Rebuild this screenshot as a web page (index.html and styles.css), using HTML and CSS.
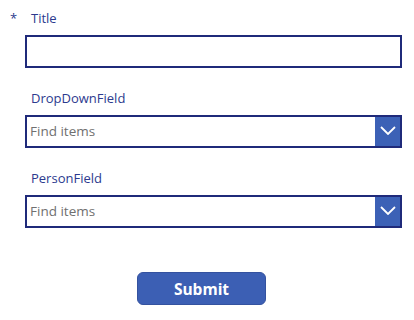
FILE: index.html
```html
<!DOCTYPE html>
<html lang="en">
<head>
<meta charset="utf-8">
<link rel="stylesheet" href="styles.css">
</head>
<body>
<form class="form">
  <div class="field">
    <div class="label"><span class="req">*</span>Title</div>
    <div class="box"></div>
  </div>
  <div class="field">
    <div class="label">DropDownField</div>
    <div class="box combo">
      <span class="ph">Find items</span>
      <span class="chev"><svg width="16" height="9" viewBox="0 0 16 9"><path d="M1 1 L8 8 L15 1" fill="none" stroke="#fff" stroke-width="1.8"/></svg></span>
    </div>
  </div>
  <div class="field">
    <div class="label">PersonField</div>
    <div class="box combo">
      <span class="ph">Find items</span>
      <span class="chev"><svg width="16" height="9" viewBox="0 0 16 9"><path d="M1 1 L8 8 L15 1" fill="none" stroke="#fff" stroke-width="1.8"/></svg></span>
    </div>
  </div>
  <div class="actions">
    <button type="button" class="submit">Submit</button>
  </div>
</form>
</body>
</html>
```
FILE: styles.css
```css
html, body {
  margin: 0;
  padding: 0;
  background: #fff;
}
body {
  font-family: "Open Sans", "Noto Sans", sans-serif;
  width: 414px;
  height: 320px;
  overflow: hidden;
}
.form {
  padding: 8px 12px 0 25px;
  display: flex;
  flex-direction: column;
  gap: 20px;
}
.field {
  display: flex;
  flex-direction: column;
  gap: 7px;
}
.label {
  position: relative;
  height: 20px;
  line-height: 20px;
  font-size: 13px;
  color: #2c3a8e;
  padding-left: 6px;
}
.req {
  position: absolute;
  left: -15px;
  top: 0;
  font-size: 13px;
  color: #2c3a8e;
}
.box {
  box-sizing: border-box;
  height: 33px;
  width: 377px;
  border: 2px solid #1f2a7a;
  background: #fff;
  display: flex;
  align-items: stretch;
}
.ph {
  flex: 1;
  display: flex;
  align-items: center;
  padding-left: 3px;
  padding-bottom: 1px;
  font-size: 13.5px;
  color: #707070;
}
.chev {
  width: 25px;
  background: #3c61b6;
  display: flex;
  align-items: center;
  justify-content: center;
  padding-bottom: 2px;
}
.actions {
  padding-top: 24px;
  padding-left: 112px;
}
.submit {
  width: 129px;
  height: 33px;
  background: #3c5fb4;
  border: 1px solid #34529f;
  border-radius: 6px;
  color: #fff;
  font-family: "Open Sans", "Noto Sans", sans-serif;
  font-weight: 700;
  font-size: 15.5px;
  padding: 0;
}
```
